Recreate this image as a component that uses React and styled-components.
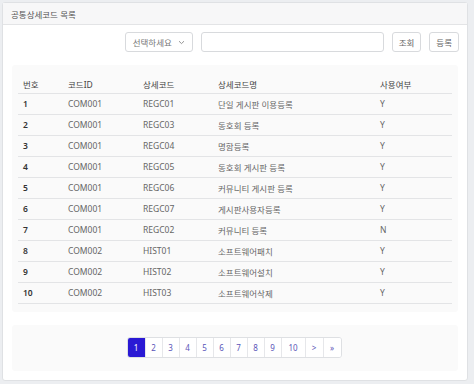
import React from 'react'
import styled, { createGlobalStyle } from 'styled-components'

const GlobalStyle = createGlobalStyle`
  html, body {
    margin: 0;
    padding: 0;
    background: #eceef1;
  }
  body {
    font-family: "Noto Sans", "Noto Sans CJK KR", sans-serif;
    color: #444;
  }
  * { box-sizing: border-box; }
`

const Page = styled.div`
  width: 474px;
  height: 384px;
  padding: 2px 6px 3px 2px;
`

const Card = styled.div`
  background: #fff;
  border: 1px solid #dfe1e4;
  border-radius: 3px;
  height: 100%;
  display: flex;
  flex-direction: column;
`

const CardHeader = styled.div`
  height: 22px;
  background: #f7f7f8;
  border-bottom: 1px solid #e3e4e6;
  display: flex;
  align-items: center;
  padding-left: 8px;
  font-size: 8.5px;
  color: #555;
`

const CardBody = styled.div`
  padding: 7px 9px 8px 9px;
  display: flex;
  flex-direction: column;
`

const Toolbar = styled.div`
  display: flex;
  justify-content: flex-end;
  align-items: center;
  gap: 8px;
  margin-right: -1px;
  height: 20px;
`

const Select = styled.div`
  width: 68px;
  height: 20px;
  border: 1px solid #d8dadd;
  border-radius: 3px;
  display: flex;
  align-items: center;
  padding-left: 7px;
  gap: 6px;
  font-size: 8.5px;
  color: #777;
`

const Input = styled.div`
  width: 183px;
  height: 20px;
  border: 1px solid #d8dadd;
  border-radius: 3px;
`

const Button = styled.div`
  height: 20px;
  padding: 0 6px;
  border: 1px solid #d8dadd;
  border-radius: 3px;
  display: flex;
  align-items: center;
  font-size: 8.5px;
  color: #666;
`

const TableBox = styled.div`
  margin-top: 13px;
  background: #fafafa;
  border-radius: 3px;
  padding: 10px 6px 8px 6px;
`

const Table = styled.table`
  width: 100%;
  border-collapse: collapse;
  font-size: 8.5px;
`

const Th = styled.th`
  text-align: left;
  font-weight: 400;
  color: #444;
  height: 18px;
  padding: 0 0 0 5px;
  border-bottom: 1px solid #e3e4e6;
  width: ${p => p.$w}px;
`

const Td = styled.td`
  height: 21px;
  padding: 0 0 0 5px;
  color: ${p => (p.$strong ? '#333' : '#666')};
  font-weight: ${p => (p.$strong ? 600 : 400)};
  border-bottom: 1px solid #e3e4e6;
`

const PagerBox = styled.div`
  margin-top: 13px;
  background: #fafafa;
  border-radius: 3px;
  height: 46px;
  display: flex;
  align-items: center;
  justify-content: center;
`

const Pager = styled.div`
  display: flex;
  border: 1px solid #dee0e3;
  border-radius: 3px;
  overflow: hidden;
  background: #fff;
  margin-right: 2px;
`

const PageItem = styled.div`
  width: ${p => p.$w || 17}px;
  height: 19px;
  display: flex;
  align-items: center;
  justify-content: center;
  font-size: 8px;
  color: ${p => (p.$active ? '#fff' : '#5a55b8')};
  background: ${p => (p.$active ? '#2a19d4' : '#fff')};
  border-left: ${p => (p.$first ? 'none' : '1px solid #e6e7ea')};
`

const rows = [
  ['1', 'COM001', 'REGC01', '단일 게시판 이용등록', 'Y'],
  ['2', 'COM001', 'REGC03', '동호회 등록', 'Y'],
  ['3', 'COM001', 'REGC04', '명함등록', 'Y'],
  ['4', 'COM001', 'REGC05', '동호회 게시판 등록', 'Y'],
  ['5', 'COM001', 'REGC06', '커뮤니티 게시판 등록', 'Y'],
  ['6', 'COM001', 'REGC07', '게시판사용자등록', 'Y'],
  ['7', 'COM001', 'REGC02', '커뮤니티 등록', 'N'],
  ['8', 'COM002', 'HIST01', '소프트웨어패치', 'Y'],
  ['9', 'COM002', 'HIST02', '소프트웨어설치', 'Y'],
  ['10', 'COM002', 'HIST03', '소프트웨어삭제', 'Y'],
]

const pages = ['1', '2', '3', '4', '5', '6', '7', '8', '9', '10', '>', '»']

const Chevron = () => (
  <svg width="7" height="5" viewBox="0 0 7 5" fill="none">
    <path d="M1 1.2 L3.5 3.6 L6 1.2" stroke="#888" strokeWidth="0.9" />
  </svg>
)

export default function App() {
  return (
    <Page>
      <GlobalStyle />
      <Card>
        <CardHeader>공통상세코드 목록</CardHeader>
        <CardBody>
          <Toolbar>
            <Select>
              선택하세요 <Chevron />
            </Select>
            <Input />
            <Button>조회</Button>
            <Button>등록</Button>
          </Toolbar>
          <TableBox>
            <Table>
              <thead>
                <tr>
                  <Th $w={45}>번호</Th>
                  <Th $w={75}>코드ID</Th>
                  <Th $w={75}>상세코드</Th>
                  <Th $w={162}>상세코드명</Th>
                  <Th>사용여부</Th>
                </tr>
              </thead>
              <tbody>
                {rows.map(r => (
                  <tr key={r[0]}>
                    <Td $strong>{r[0]}</Td>
                    <Td>{r[1]}</Td>
                    <Td>{r[2]}</Td>
                    <Td>{r[3]}</Td>
                    <Td>{r[4]}</Td>
                  </tr>
                ))}
              </tbody>
            </Table>
          </TableBox>
          <PagerBox>
            <Pager>
              {pages.map((p, i) => (
                <PageItem
                  key={p}
                  $first={i === 0}
                  $active={i === 0}
                  $w={p === '10' ? 24 : p === '>' || p === '»' ? 18 : 17}
                >
                  {p}
                </PageItem>
              ))}
            </Pager>
          </PagerBox>
        </CardBody>
      </Card>
    </Page>
  )
}
